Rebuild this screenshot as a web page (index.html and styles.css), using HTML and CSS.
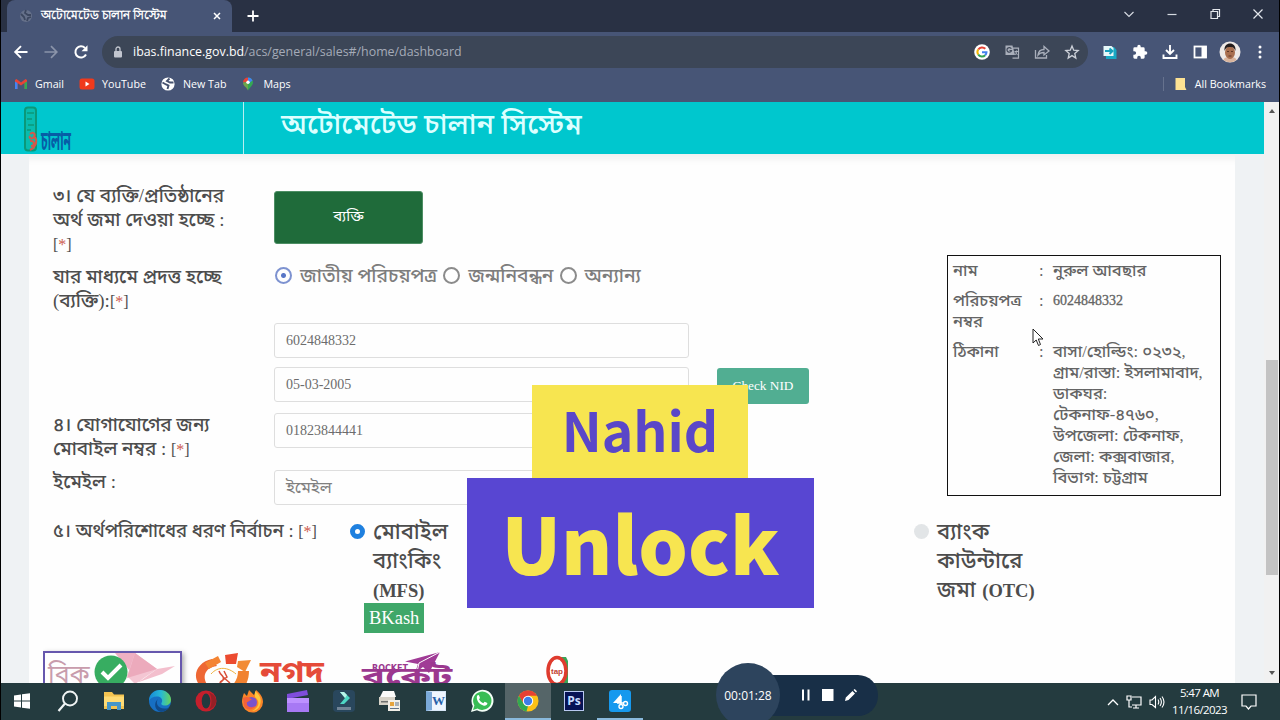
FILE: index.html
```html
<!DOCTYPE html>
<html lang="bn">
<head>
    <meta charset="UTF-8">
    <meta name="viewport" content="width=device-width, initial-scale=1.0">
    <title>অটোমেটেড চালান সিস্টেম</title>
    <link rel="stylesheet" href="styles.css">
</head>
<body>

    <div class="screen">

        <!-- browser chrome -->
        <div class="tab-strip">
            <div class="tab">
                <svg class="globe" width="14" height="14" viewBox="0 0 14 14"><circle cx="7" cy="7" r="6" fill="#66718a"/><path d="M2 5l3 3 1 3M7 1L6 4l3 2 3 0M8 12l1-3 3-1" fill="none" stroke="#3c475f" stroke-width="1.8"/></svg>
                <span class="tab-title">অটোমেটেড চালান সিস্টেম</span>
                <svg class="tab-close" width="8" height="8" viewBox="0 0 8 8"><path d="M1 1l6 6M7 1L1 7" stroke="#fff" stroke-width="1.5"/></svg>
            </div>
            <svg class="new-tab" width="12" height="12" viewBox="0 0 12 12"><path d="M6 0.5v11M0.5 6h11" stroke="#fff" stroke-width="1.8"/></svg>
            <div class="window-buttons">
                <svg width="12" height="12" viewBox="0 0 12 12"><path d="M1.5 4l4.5 4.5L10.500 4" fill="none" stroke="#d5d9e1" stroke-width="1.2"/></svg>
                <svg width="12" height="12" viewBox="0 0 12 12"><path d="M1.500 6.500h9" stroke="#d5d9e1" stroke-width="1.2"/></svg>
                <svg width="12" height="12" viewBox="0 0 12 12"><path d="M2 3.500h6.500v7H2zM4 3.500V1.500h6.500V8.500h-2" fill="none" stroke="#e4e7ec" stroke-width="1.2"/></svg>
                <svg width="12" height="12" viewBox="0 0 12 12"><path d="M1.500 1.500l9 9M10.500 1.500l-9 9" stroke="#e4e7ec" stroke-width="1.2"/></svg>
            </div>
        </div>

        <div class="toolbar">
            <div class="nav-buttons">
                <svg width="16" height="16" viewBox="0 0 16 16"><path d="M14.500 8H2.500M8 2.200L2.200 8 8 13.800" fill="none" stroke="#fff" stroke-width="1.9"/></svg>
                <svg width="16" height="16" viewBox="0 0 16 16"><path d="M1.500 8H13.500M8 2.200L13.800 8 8 13.800" fill="none" stroke="#8b94aa" stroke-width="1.700"/></svg>
                <svg width="16" height="16" viewBox="0 0 16 16"><path d="M13 10.500A5.600 5.600 0 1 1 12 4" fill="none" stroke="#fff" stroke-width="2"/><path d="M14.500 1.200v6H8.500z" fill="#fff"/></svg>
            </div>
            <div class="address-bar">
                <svg width="10" height="12" viewBox="0 0 10 12"><rect x="1" y="5" width="8" height="6.500" rx="1" fill="#c2c6cf"/><path d="M3 5V3a2 2 0 0 1 4 0v2" fill="none" stroke="#c2c6cf" stroke-width="1.300"/></svg>
                <span class="url">ibas.finance.gov.bd<span class="url-path">/acs/general/sales#/home/dashboard</span></span>
                <div class="address-icons">
                    <svg width="16" height="16" viewBox="0 0 16 16"><circle cx="8" cy="8" r="7.800" fill="#fff"/><g fill="none" stroke-width="2"><path d="M4.300 5.500A4.500 4.500 0 0 1 11.300 4.800" stroke="#e54335"/><path d="M4.200 5.500a4.600 4.600 0 0 0 0 5" stroke="#f6b704"/><path d="M4.200 10.500a4.500 4.500 0 0 0 7 .8" stroke="#34a353"/><path d="M8 8.200h4.500a4.500 4.500 0 0 1-1.300 3.100" stroke="#4280ef"/></g></svg>
                    <svg width="16" height="16" viewBox="0 0 16 16"><path d="M9 4.200h5.500v10H8.500" fill="none" stroke="#a9afbb" stroke-width="1.200"/><path d="M1.500 1.500h7l2.500 9.500H1.500z" fill="#a9afbb"/><path d="M7.300 4.800A2.300 2.300 0 1 0 7.500 6.500H5.500" fill="none" stroke="#414a5b" stroke-width="1.200"/><path d="M10.500 7.500h3.500M12.500 6.500v1c0 2-.5 2.500-1.500 3.500M11.500 8.500l2 2.500" fill="none" stroke="#a9afbb"/></svg>
                    <svg width="16" height="16" viewBox="0 0 16 16"><path d="M1.500 6v8h11v-3" fill="none" stroke="#a9afbb" stroke-width="1.300"/><path d="M4 11c.5-4 3-5.500 6-5.500V2.500l5 4.500-5 4V8.500C7.500 8.500 5.500 9 4 11z" fill="none" stroke="#a9afbb" stroke-width="1.300"/></svg>
                    <svg width="16" height="16" viewBox="0 0 16 16"><path d="M8 2l1.700 4.200 4.500.4-3.400 3 1 4.400L8 11.600 4.200 14l1-4.400-3.400-3 4.500-.4z" fill="none" stroke="#cdd1d9" stroke-width="1.300"/></svg>
                </div>
            </div>
            <div class="extension-icons">
                <svg width="16" height="16" viewBox="0 0 16 16"><path d="M4 3h8l2.500 3v9H4z" fill="#18a8c4"/><path d="M1.500 2h8l2 2v8h-10z" fill="#e6f8fa"/><path d="M3 7h7M7.500 4.500L10.500 7l-3 3" fill="none" stroke="#16a0bd" stroke-width="2"/></svg>
                <svg width="16" height="16" viewBox="0 0 24 24"><path d="M20.500 11H19V7a2 2 0 0 0-2-2h-4V3.500a2.500 2.500 0 0 0-5 0V5H4a2 2 0 0 0-2 2v3.800h1.500a2.700 2.700 0 0 1 0 5.400H2V20a2 2 0 0 0 2 2h3.800v-1.500a2.700 2.700 0 0 1 5.400 0V22H17a2 2 0 0 0 2-2v-4h1.500a2.500 2.500 0 0 0 0-5z" fill="#fff"/></svg>
                <svg width="16" height="16" viewBox="0 0 16 16"><path d="M8 1v8M4 6l4 4 4-4M1.500 10.500v3.500h13v-3.500" fill="none" stroke="#fff" stroke-width="1.900"/></svg>
                <svg width="16" height="16" viewBox="0 0 16 16"><rect x="2.500" y="2.500" width="11.500" height="11" fill="none" stroke="#fff" stroke-width="1.800"/><path d="M9.500 2h5v12h-5z" fill="#fff"/></svg>
                <svg class="avatar" width="22" height="22" viewBox="0 0 22 22"><circle cx="11" cy="11" r="10.500" fill="#eee9e7"/><path d="M4.500 19c1-3 4-3 6.500-3s5.500 0 6.500 3a10.500 10.500 0 0 1-13 0z" fill="#d9b49d"/><ellipse cx="11" cy="11.500" rx="5" ry="6.500" fill="#a96f50"/><path d="M5.500 10C5 4.500 8 2.500 11 2.500s6 2 5.500 7.500C15 6.500 14 6 11 6s-4 .5-5.500 4z" fill="#231c1c"/><path d="M8 10.500h2M12 10.500h2M9.500 15h3" stroke="#603727"/></svg>
                <svg width="16" height="16" viewBox="0 0 16 16"><circle cx="8" cy="3" r="1.500" fill="#fff"/><circle cx="8" cy="8" r="1.500" fill="#fff"/><circle cx="8" cy="13" r="1.500" fill="#fff"/></svg>
            </div>
        </div>

        <div class="bookmarks">
            <div class="bookmark">
                <svg width="14" height="14" viewBox="0 0 14 14"><path d="M1 3v9h2.500V6L7 8.500 10.500 6v6H13V3l-1.500-1L7 5.500 2.500 2z" fill="#ea4335"/><path d="M1 4.500V12h2.500V6z" fill="#4285f4"/><path d="M10.500 6v6H13V4.500z" fill="#34a853"/></svg>
                <span>Gmail</span>
            </div>
            <div class="bookmark bookmark-youtube">
                <svg width="16" height="14" viewBox="0 0 16 14"><rect x="0.500" y="1.500" width="15" height="11" rx="2.500" fill="#f03a1c"/><path d="M6.500 4.500l4 2.500-4 2.500z" fill="#fff"/></svg>
                <span>YouTube</span>
            </div>
            <div class="bookmark bookmark-newtab">
                <svg width="14" height="14" viewBox="0 0 14 14"><circle cx="7" cy="7" r="6.600" fill="#fff"/><path d="M1.500 5.500l3.500 2 2.500 1-1 3.500M8.500 1.500L6 4l3 1.500 3.500 0" fill="none" stroke="#46526f" stroke-width="1.900"/></svg>
                <span>New Tab</span>
            </div>
            <div class="bookmark bookmark-maps">
                <svg width="12" height="14" viewBox="0 0 12 14"><path d="M6 .5a5 5 0 0 1 5 5c0 3-3.500 5-5 8z" fill="#34a853"/><path d="M1 5.500a5 5 0 0 1 5-5V5z" fill="#ea4335"/><path d="M6 .5a5 5 0 0 1 4.500 3L6 7z" fill="#4285f4"/><path d="M1 5.500C1 9 4.500 10 6 13.500V5z" fill="#6ca64b"/><circle cx="6" cy="5.300" r="1.700" fill="#fff"/></svg>
                <span>Maps</span>
            </div>
            <div class="all-bookmarks">
                <svg width="12" height="14" viewBox="0 0 12 14"><path d="M.5 1h9.500v9l1.500 3H.5z" fill="#fde293"/></svg>
                <span>All Bookmarks</span>
            </div>
        </div>

        <!-- web page -->
        <div class="viewport">
            <div class="page">
                <div class="site-header">
                    <div class="brand">
                        <svg width="16" height="46" viewBox="0 0 16 46"><rect x="2" y="1.500" width="11" height="43" rx="3" fill="#08bcae" stroke="#0b9879" stroke-width="2"/><path d="M4 7h7M4 13h5M5 19h6M4 24h4" stroke="#0b9879" stroke-width="1.500"/><path d="M7 28c3-3 6 0 4 3-3 3-5 1-4-1M12 31c3 5 0 11-5 13M7 35c5-1 5 5 1 5" fill="none" stroke="#d5574a" stroke-width="2"/></svg>
                        <span class="brand-text">চালান</span>
                    </div>
                    <div class="site-title">অটোমেটেড চালান সিস্টেম</div>
                </div>

                <div class="content">
                    <div class="applicant">
                        <div class="form">
                            <div class="row row-person">
                                <div class="label">৩। যে ব্যক্তি/প্রতিষ্ঠানের<br>অর্থ জমা দেওয়া হচ্ছে :<br><span class="required">[<em>*</em>]</span></div>
                                <button class="btn-person">ব্যক্তি</button>
                            </div>
                            <div class="row row-medium">
                                <div class="label">যার মাধ্যমে প্রদত্ত হচ্ছে<br>(ব্যক্তি):<span class="required">[<em>*</em>]</span></div>
                                <div class="options">
                                    <i class="ring checked"></i><span>জাতীয় পরিচয়পত্র</span>
                                    <i class="ring"></i><span>জন্মনিবন্ধন</span>
                                    <i class="ring"></i><span>অন্যান্য</span>
                                </div>
                            </div>
                            <div class="row row-nid">
                                <div class="label"></div>
                                <div class="field">6024848332</div>
                            </div>
                            <div class="row row-date">
                                <div class="label"></div>
                                <div class="field">05-03-2005</div>
                                <button class="btn-check">Check NID</button>
                            </div>
                            <div class="row row-mobile">
                                <div class="label">৪। যোগাযোগের জন্য<br>মোবাইল নম্বর : <span class="required">[<em>*</em>]</span></div>
                                <div class="field">01823844441</div>
                            </div>
                            <div class="row row-email">
                                <div class="label">ইমেইল :</div>
                                <div class="field placeholder">ইমেইল</div>
                            </div>
                        </div>

                        <div class="info-box">
                            <span>নাম</span><span>:</span><span>নুরুল আবছার</span>
                            <span>পরিচয়পত্র<br>নম্বর</span><span>:</span><span class="info-number">6024848332</span>
                            <span>ঠিকানা</span><span>:</span><span>বাসা/হোল্ডিং: ০২৩২,<br>গ্রাম/রাস্তা: ইসলামাবাদ,<br>ডাকঘর:<br>টেকনাফ-৪৭৬০,<br>উপজেলা: টেকনাফ,<br>জেলা: কক্সবাজার,<br>বিভাগ: চট্টগ্রাম</span>
                        </div>
                    </div>

                    <div class="payment">
                        <div class="label payment-label">৫। অর্থপরিশোধের ধরণ নির্বাচন : <span class="required">[<em>*</em>]</span></div>
                        <div class="method mobile-banking">
                            <i class="dot dot-on"></i>
                            <div class="method-name">মোবাইল<br>ব্যাংকিং<br><b>(MFS)</b><br><span class="badge">BKash</span></div>
                        </div>
                        <div class="method">
                            <i class="dot"></i>
                            <div class="method-name">ব্যাংক<br>কাউন্টারে<br>জমা <b class="otc">(OTC)</b></div>
                        </div>
                    </div>

                    <div class="wallets">
                        <div class="wallet wallet-bkash">
                            <span class="bkash-text">বিক</span>
                            <svg class="bkash-art" width="88" height="34" viewBox="0 0 88 34"><path d="M23 0h20l17 15-13 14z" fill="#efb0c3"/><path d="M43 0l22 16-22 15-8-8z" fill="#f4c6d3"/><path d="M43 0l22 16-30 9z" fill="#ecaabc"/><path d="M65 16l18-3-13 8-23 8z" fill="#f3bfcd"/><circle cx="19" cy="19" r="16.500" fill="#37ad61"/><path d="M10 19l6 6 13-13" fill="none" stroke="#fff" stroke-width="4"/></svg>
                        </div>
                        <div class="wallet wallet-nagad">
                            <svg width="57" height="36" viewBox="0 0 57 36"><path d="M17 7C2 10-5 25 7 36h8C5 26 10 15 22 14z" fill="#ee6734"/><path d="M10 11l13-7 3 6-12 7z" fill="#f48432"/><path d="M30 3l13-2-2 11-10 0z" fill="#ec4b30"/><path d="M43 9l13-1-6 12-8-5z" fill="#f28b35"/><path d="M43 19l11 0c0 7-2 12-5 17H34c6-4 9-10 9-17z" fill="#f18230"/><path d="M16 22c7-8 17-7 25 0" fill="none" stroke="#efb13b"/><path d="M24 19c2 6 6 4 4 9l-4 4M29 19l3 6-7 5M28 25l7 6" fill="none" stroke="#d94e37" stroke-width="1.500"/></svg>
                            <span class="nagad-text">নগদ</span>
                        </div>
                        <div class="wallet wallet-rocket">
                            <span class="rocket-en">ROCKET</span>
                            <svg class="rocket-art" width="35" height="22" viewBox="0 0 35 22"><path d="M0 9.500L35 0 24 21l-6-6-8 6 3-9z" fill="#a03b96"/><path d="M35 0L14 11l-2 9" fill="none" stroke="#fff"/></svg>
                            <span class="rocket-bn">রকেট</span>
                        </div>
                        <div class="wallet wallet-tap">
                            <svg width="26" height="32" viewBox="0 0 26 32"><path d="M13 3h8l2 4v25h-6" fill="#39a557"/><ellipse cx="12" cy="17" rx="9" ry="13.500" fill="#fff" stroke="#df3b2e" stroke-width="3.500"/></svg>
                            <span class="tap-text">tap</span>
                        </div>
                    </div>
                </div>
            </div>

            <div class="scrollbar">
                <span class="arrow-up"></span>
                <span class="thumb"></span>
                <span class="arrow-down"></span>
            </div>
        </div>

        <!-- windows taskbar -->
        <div class="taskbar">
            <div class="task"><svg width="16" height="16" viewBox="0 0 16 16"><path d="M0 2.500L7 1.500V7.500H0zM8 1.300L16 .2V7.500H8zM0 8.500H7V14.500L0 13.500zM8 8.500h8V15.800L8 14.700z" fill="#fff"/></svg></div>
            <div class="task"><svg width="22" height="22" viewBox="0 0 22 22"><circle cx="13" cy="8.500" r="7" fill="none" stroke="#f1f5f5" stroke-width="1.900"/><path d="M8 13.500L1.500 21" stroke="#f1f5f5" stroke-width="2.200"/></svg></div>
            <div class="task"><svg width="22" height="20" viewBox="0 0 22 20"><path d="M1 1h8l2 2.500h10V18H1z" fill="#f4c451"/><path d="M1 5.500h20V15H1z" fill="#ffdc75"/><path d="M4 11h14v8h-4v-4H8v4H4z" fill="#4596c9"/></svg></div>
            <div class="task"><svg width="24" height="24" viewBox="0 0 24 24"><defs><linearGradient id="edge"><stop stop-color="#1688d7"/><stop offset=".55" stop-color="#27b9d4"/><stop offset="1" stop-color="#69d35a"/></linearGradient></defs><circle cx="12" cy="12" r="11" fill="#176fc3"/><path d="M1 12C1 5 6 1 12 1s11 4.500 11 9.500c0 4-3 6-6 6-3.500 0-4.500-1.500-3-3.500C15 9.500 12 7.500 9 7.500c-4 0-7 2-8 4.500z" fill="url(#edge)"/><path d="M10 10c-3 4 0 10 7 9.500 2 0 3.500-.5 4.500-1.500-1 2-5 5-8.500 5C7 22 5 14 10 10z" fill="#104a8a"/></svg></div>
            <div class="task"><svg width="22" height="22" viewBox="0 0 22 22"><circle cx="11" cy="11" r="10.500" fill="#c51f2c"/><path d="M14 2.500c3 3 3.500 13 0 17 10-4 9-14 0-17z" fill="#962026"/><ellipse cx="11" cy="11" rx="4.300" ry="7.500" fill="#233a3f"/></svg></div>
            <div class="task"><svg width="24" height="24" viewBox="0 0 24 24"><path d="M4 4l3 3 2-6 5 5 2-5c5 4 7 8 7 12a10.500 10.500 0 0 1-21 0c0-4 1-6 2-9z" fill="#fb8528"/><path d="M15 2c5 4 7 8 5 14-1 4-5 6-8 6 8-4 8-10 3-14z" fill="#fdc73b"/><circle cx="11.500" cy="13.500" r="5.500" fill="#7953cb"/><path d="M3 9c4-2 6-1 9 2-3 0-3 2-5 2-1 4 3 7 8 4-1 4-9 5-11 0z" fill="#f3623b"/></svg></div>
            <div class="task"><svg width="24" height="24" viewBox="0 0 24 24"><path d="M1 5L21 1l1 5L1 10z" fill="#7f4ddb"/><path d="M1 9h22v14H1z" fill="#a779f4"/><path d="M1 9h22v5H1z" fill="#bd91ff"/></svg></div>
            <div class="task"><svg width="24" height="24" viewBox="0 0 24 24"><rect x="1" y="1" width="22" height="22" rx="4" fill="#29475d"/><path d="M8 3h4l6 6-6 6H8l5-6z" fill="#4ed7c5"/><path d="M8 3h4l3 3-2 3z" fill="#b9f3ea"/><path d="M5 18h14v3H5z" fill="#718496"/></svg></div>
            <div class="task"><svg width="24" height="24" viewBox="0 0 24 24"><path d="M5 2h11l2 6H2z" fill="#fbfbfa"/><path d="M1 8h16v8H1z" fill="#d7d3c8"/><path d="M3 12h12v1.500H3z" fill="#6e706f"/><path d="M10 11h12v11H10z" fill="#f2efe7"/><path d="M12 13h4v4h-4z" fill="#e6a43c"/><path d="M17 14h4M17 16h4M12 19.500h9" stroke="#617387"/></svg></div>
            <div class="task"><span class="word-icon">W</span></div>
            <div class="task"><svg width="24" height="24" viewBox="0 0 24 24"><path d="M1 23l1.800-6A11 11 0 1 1 7 21.300z" fill="#f4fff7"/><path d="M3 21l1.400-4.500A9.200 9.200 0 1 1 7.500 19.600z" fill="#38bd55"/><path d="M7 7c1-1.500 2-1 2.300 0l.7 2-1 1.200c1 2 2.500 3.300 4.300 4l1.300-1.500 2.800 1.300c0 2-1.800 3-3.500 2.700C9 15.500 6 11 7 7z" fill="#fff"/></svg></div>
            <div class="task active"><svg width="22" height="22" viewBox="0 0 22 22"><circle cx="11" cy="11" r="10.500" fill="#fbc116"/><path d="M1.900 5.700A10.500 10.500 0 0 1 20.100 5.700H11L6.400 13.600z" fill="#e74133"/><path d="M1.900 5.700L6.500 13.600 11 16 9.500 21.400A10.500 10.500 0 0 1 1.900 5.700z" fill="#31a952"/><circle cx="11" cy="11" r="5.200" fill="#fff"/><circle cx="11" cy="11" r="4.200" fill="#3d7de8"/></svg></div>
            <div class="task"><span class="ps-icon">Ps</span></div>
            <div class="task running"><svg width="22" height="22" viewBox="0 0 22 22"><rect width="22" height="22" rx="3" fill="#1699ee"/><path d="M4 13L12 4v9z" fill="#fff"/><path d="M12 6v9M8 13h7" stroke="#fff" stroke-width="1.500"/><circle cx="12" cy="16.500" r="2" fill="none" stroke="#fff" stroke-width="1.400"/><circle cx="16.500" cy="13.500" r="2" fill="none" stroke="#fff" stroke-width="1.400"/></svg></div>

            <div class="tray">
                <svg width="12" height="8" viewBox="0 0 12 8"><path d="M1 7l5-5 5 5" fill="none" stroke="#fff" stroke-width="1.300"/></svg>
                <svg width="16" height="14" viewBox="0 0 16 14"><path d="M6 2h9v8H6M10 10v3M7 13h6M1 1h4v4H1zM3 5v7h3" fill="none" stroke="#fff" stroke-width="1.200"/></svg>
                <svg width="16" height="14" viewBox="0 0 16 14"><path d="M1 5h2l3.500-3.500v11L3 9.500H1zM9 4.500q1.500 2.500 0 5M11 3q2.800 4 0 8M13 1.500q4 5.500 0 11" fill="none" stroke="#fff" stroke-width="1.100"/></svg>
                <div class="clock">5:47 AM<br>11/16/2023</div>
                <svg class="notify" width="16" height="16" viewBox="0 0 16 16"><path d="M1 1h14v11h-5l-2.500 3L5 12H1z" fill="none" stroke="#fff" stroke-width="1.200"/></svg>
            </div>
        </div>

        <!-- things floating over the desktop -->
        <svg class="cursor" width="12" height="19" viewBox="0 0 12 19"><path d="M1 1v14l3.200-3 2.300 5.500 2-1L6.300 11H11z" fill="#fff" stroke="#222"/></svg>

        <div class="overlay overlay-name">Nahid</div>
        <div class="overlay overlay-unlock">Unlock</div>

        <div class="recorder">
            <div class="recorder-time">00:01:28</div>
            <div class="recorder-controls">
                <svg width="10" height="12" viewBox="0 0 10 12"><path d="M2 .5v11M7.500 .5v11" stroke="#fff" stroke-width="2"/></svg>
                <svg width="12" height="12" viewBox="0 0 12 12"><path d="M0 0h11.500v12H0z" fill="#fff"/></svg>
                <svg width="12" height="12" viewBox="0 0 12 12"><path d="M0 12l.8-3.500L7.500 2l2.500 2.500-6.500 6.500zM8.500 1L9.700 0 12 2.200 11 3.500z" fill="#fff"/></svg>
            </div>
        </div>

    </div>

</body>
</html>
```
FILE: styles.css
```css
body{
    margin: 0;
    background-color: #000;
    font-family: "Liberation Serif", "Noto Sans Bengali", "Noto Sans", serif;
}

svg{
    display: block;
    flex-shrink: 0;
}

.screen{
    position: relative;
    display: flex;
    flex-direction: column;
    box-sizing: border-box;
    width: 1280px;
    height: 720px;
    padding: 0 1px;
    overflow: hidden;
    white-space: nowrap;
}

/* browser chrome */
.tab-strip{
    display: flex;
    align-items: center;
    height: 32px;
    background-color: #293144;
}

.tab{
    display: flex;
    align-items: center;
    box-sizing: border-box;
    width: 225px;
    height: 32px;
    margin-left: 6px;
    padding: 0 11px 0 12px;
    border-radius: 8px 8px 0 0;
    background-color: #475576;
    color: #fff;
}

.tab-title{
    margin-left: 8px;
    font: 600 12.300px "Noto Sans", sans-serif;
}

.tab-close{
    margin-left: auto;
}

.new-tab{
    margin-left: 15px;
}

.window-buttons{
    display: flex;
    gap: 31px;
    margin: -4px 15px 0 auto;
}

.toolbar{
    display: flex;
    align-items: center;
    height: 39px;
    background-color: #475576;
}

.nav-buttons{
    display: flex;
    gap: 14px;
    margin-left: 12px;
}

.address-bar{
    display: flex;
    align-items: center;
    box-sizing: border-box;
    width: 986px;
    height: 32px;
    margin-left: 13px;
    padding: 0 8px 0 11px;
    border-radius: 16px;
    background-color: #3c4657;
}

.url{
    margin-left: 10px;
    color: #fff;
    font: 12.400px "Open Sans", sans-serif;
}

.url-path{
    color: #a5abb8;
}

.address-icons{
    display: flex;
    gap: 14px;
    margin-left: auto;
}

.extension-icons{
    display: flex;
    align-items: center;
    gap: 14px;
    margin-left: 14px;
}

.avatar{
    margin: 0 -3px;
}

.bookmarks{
    display: flex;
    align-items: center;
    box-sizing: border-box;
    height: 31px;
    padding: 0 13px 5px;
    background-color: #475576;
    color: #fff;
    font: 10.700px "Open Sans", sans-serif;
}

.bookmark, .all-bookmarks{
    display: flex;
    align-items: center;
    gap: 7px;
}

.bookmark-youtube, .bookmark-newtab{
    margin-left: 15px;
}

.bookmark-newtab, .all-bookmarks{
    gap: 8px;
}

.bookmark-maps{
    gap: 9px;
    margin-left: 16px;
}

.all-bookmarks{
    margin-left: auto;
    padding-left: 11px;
    border-left: 1px solid #66728e;
}

/* page */
.viewport{
    display: flex;
    height: 581px;
    overflow: hidden;
}

.page{
    width: 1263px;
    background-color: #eff2f4;
}

.site-header{
    display: flex;
    height: 52px;
    background-color: #00c7ce;
}

.brand{
    display: flex;
    box-sizing: border-box;
    width: 243px;
    padding: 4px 0 0 22px;
    border-right: 1px solid #b9eef0;
}

.brand-text{
    margin-left: 2px;
    color: #075da6;
    font-size: 20px;
    font-weight: bold;
    line-height: 64px;
    transform: scale(0.6, 1.35);
    transform-origin: 0 50%;
}

.site-title{
    margin-left: 37px;
    color: #dcffff;
    font-size: 28.800px;
    font-weight: 500;
    line-height: 44px;
}

.content{
    box-sizing: border-box;
    width: 1206px;
    height: 529px;
    margin-left: 28px;
    padding-left: 24px;
    background-color: #fefefe;
    box-shadow: inset 0 12px 8px -8px #eeeeee;
}

.applicant{
    display: flex;
    justify-content: space-between;
    box-sizing: border-box;
    height: 362px;
    padding: 30px 14px 0 0;
}

.row{
    display: flex;
}

.label{
    width: 221px;
    color: #4d4d4d;
    font-size: 18.900px;
    font-weight: 500;
    line-height: 24px;
}

.required{
    font-size: 16px;
}

.required em{
    color: #cc5a4d;
    font-style: normal;
}

button{
    padding: 0;
    border: 0;
    border-radius: 3px;
    color: #fff;
    font-family: inherit;
}

.row-person{
    height: 80px;
}

.row-medium .label{
    padding-top: 1px;
}

.btn-person{
    width: 149px;
    height: 53px;
    margin-top: 7px;
    padding-bottom: 2px;
    border: 1px solid #4d8e64;
    background-color: #1f6b3a;
    font-size: 15px;
}

.row-medium{
    height: 60px;
}

.options{
    display: flex;
    height: 25px;
    align-items: center;
    color: #7d7d7d;
    font-size: 19.200px;
    font-weight: 500;
}

.ring{
    box-sizing: border-box;
    width: 17px;
    height: 17px;
    margin: -2px 8px 0 6px;
    border: 2px solid #8b8b8b;
    border-radius: 50%;
}

.checked{
    margin-left: 1px;
    border-color: #7d92d0;
    background: radial-gradient(#5876c6 2px, #fefefe 3px);
}

.row-nid{
    height: 44px;
}

.field{
    box-sizing: border-box;
    width: 415px;
    height: 35px;
    margin-top: -1px;
    padding-left: 11px;
    border: 1px solid #dedede;
    border-radius: 3px;
    color: #6c6c6c;
    font-size: 14px;
    line-height: 33px;
}

.row-date{
    height: 46px;
}

.btn-check{
    width: 92px;
    height: 36px;
    margin-left: 28px;
    padding-bottom: 1px;
    background-color: #51ae92;
    font-size: 13.300px;
}

.row-mobile{
    height: 57px;
}

.row-mobile .label, .row-email .label{
    margin-top: -1px;
}

.placeholder{
    color: #808080;
    font-size: 16.500px;
}

.info-box{
    display: grid;
    grid-template-columns: 86px 14px 1fr;
    align-content: start;
    row-gap: 9px;
    box-sizing: border-box;
    width: 274px;
    height: 241px;
    margin-top: 71px;
    padding: 4px 0 0 5px;
    border: 1px solid #111;
    color: #646464;
    font-size: 16.500px;
    font-weight: 500;
    line-height: 21px;
}

.info-number{
    font-size: 14px;
    -webkit-text-stroke: 0.3px #646464;
}

.payment{
    display: flex;
    height: 129px;
}

.payment-label{
    width: 297px;
    padding-top: 3px;
    font-size: 18.500px;
}

.method{
    display: flex;
}

.mobile-banking{
    width: 564px;
}

.dot{
    box-sizing: border-box;
    width: 15px;
    height: 15px;
    margin: 8px 8px 0 0;
    border-radius: 50%;
    background-color: #e2e5e7;
}

.dot-on{
    border: 5px solid #1f80df;
    background-color: #fff;
}

.method-name{
    padding-top: 1px;
    color: #4d4d4d;
    font-size: 22px;
    font-weight: 500;
    line-height: 29px;
}

.method-name b{
    font-size: 18.500px;
}

.otc{
    margin-left: 1px;
}

.badge{
    display: inline-block;
    height: 30px;
    margin: -3px 0 0 -9px;
    padding: 0 5px;
    background-color: #3fa769;
    color: #fff;
    font-size: 18.500px;
    font-weight: normal;
    line-height: 30px;
    vertical-align: top;
}

/* payment provider logos, cut off by the taskbar */
.wallets{
    display: flex;
    height: 38px;
    margin-left: -10px;
    overflow: hidden;
}

.wallet{
    position: relative;
    height: 50px;
}

.wallet-bkash{
    box-sizing: border-box;
    display: flex;
    width: 139px;
    margin-top: 6px;
    border: 2px solid #6657ad;
    box-shadow: 2px 2px 5px #aaa;
}

.bkash-text{
    width: 46px;
    padding-left: 3px;
    color: #c89cac;
    font-size: 25px;
    line-height: 44px;
}

.wallet-nagad{
    display: flex;
    width: 168px;
    margin-left: 13px;
    padding-top: 7px;
}

.nagad-text{
    margin-left: 8px;
    color: #e54b39;
    font-size: 34px;
    font-weight: bold;
    line-height: 38px;
    transform: scaleY(0.9);
}

.wallet-rocket{
    width: 182px;
    color: #9b388f;
}

.rocket-en{
    position: absolute;
    top: 19px;
    left: 9px;
    font: bold 8px "DejaVu Sans", sans-serif;
}

.rocket-art{
    position: absolute;
    top: 7px;
    left: 42px;
}

.rocket-bn{
    position: absolute;
    top: 9px;
    left: -1px;
    font-size: 38px;
    font-weight: bold;
    line-height: 46px;
    transform: scaleY(0.65);
}

.wallet-tap{
    padding-top: 9px;
}

.tap-text{
    position: absolute;
    top: 22px;
    left: 6px;
    color: #c34332;
    font: bold 8px "Liberation Sans", sans-serif;
}

.scrollbar{
    display: flex;
    flex-direction: column;
    align-items: center;
    width: 15px;
    background-color: #f1f1f1;
}

.arrow-up, .arrow-down{
    border: 3px solid transparent;
}

.arrow-up{
    margin-top: 4px;
    border-bottom: 4px solid #555;
}

.thumb{
    width: 12px;
    height: 215px;
    margin: 247px 0 0 1px;
    background-color: #c3c3c3;
}

.arrow-down{
    margin-top: 96px;
    border-top: 4px solid #555;
}

/* taskbar */
.taskbar{
    display: flex;
    height: 37px;
    margin-right: -1px;
    padding-right: 1px;
    background-color: #243b3f;
}

.task{
    display: flex;
    align-items: center;
    justify-content: center;
    box-sizing: border-box;
    width: 46px;
    border-bottom: 2px solid transparent;
}

.task:first-child{
    margin-left: -2px;
}

.active{
    border-color: #8ab9dc;
    background-color: #556568;
}

.running{
    border-color: #8ab9dc;
}

.word-icon, .ps-icon{
    box-sizing: border-box;
    width: 20px;
    height: 20px;
    text-align: center;
}

.word-icon{
    border: 1px solid #d8e7f7;
    border-left: 6px solid #7ba9d8;
    background-color: #eff6ff;
    color: #2861a9;
    font: bold 13px/18px "Liberation Serif", serif;
}

.ps-icon{
    border: 1px solid #b9c9f1;
    background-color: #071355;
    color: #c9dcff;
    font: bold 12px/17px "Open Sans", sans-serif;
}

.tray{
    display: flex;
    align-items: center;
    gap: 7px;
    margin-left: auto;
    padding-right: 22px;
    color: #fff;
}

.clock{
    margin-top: -2px;
    font: 11.500px/17px "Open Sans", sans-serif;
    letter-spacing: -0.6px;
    text-align: center;
}

.notify{
    margin-left: 7px;
}

/* floating layers */
.cursor{
    position: absolute;
    top: 328px;
    left: 1032px;
}

.overlay{
    position: absolute;
    text-align: center;
    font-family: "Noto Sans CJK SC", sans-serif;
}

.overlay-name{
    top: 385px;
    left: 532px;
    width: 216px;
    height: 93px;
    background-color: #f7e550;
    color: #5a47c8;
    font-size: 53.500px;
    font-weight: 700;
    line-height: 88px;
}

.overlay-unlock{
    top: 478px;
    left: 467px;
    width: 347px;
    height: 130px;
    background-color: #5846d2;
    color: #f7e550;
    font-size: 78px;
    font-weight: 900;
    line-height: 126px;
}

.recorder{
    position: absolute;
    top: 663px;
    left: 716px;
    display: flex;
    align-items: center;
    height: 64px;
}

.recorder-time{
    z-index: 1;
    width: 64px;
    height: 64px;
    border-radius: 50%;
    background-color: #2d445d;
    color: #fff;
    font: 12px/65px "Open Sans", sans-serif;
    text-align: center;
}

.recorder-controls{
    display: flex;
    align-items: center;
    gap: 11px;
    box-sizing: border-box;
    width: 130px;
    height: 41px;
    margin-left: -32px;
    padding-left: 53px;
    border-radius: 0 20px 20px 0;
    background-color: #182f47;
}
```
